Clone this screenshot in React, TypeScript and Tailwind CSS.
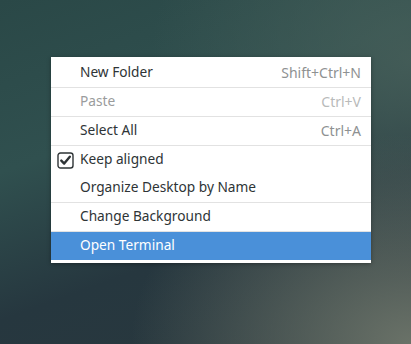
import React from 'react';

type Item = {
  label: string;
  shortcut?: string;
  disabled?: boolean;
  checked?: boolean;
  active?: boolean;
  sepAfter?: boolean;
};

const items: Item[] = [
  { label: 'New Folder', shortcut: 'Shift+Ctrl+N', sepAfter: true },
  { label: 'Paste', shortcut: 'Ctrl+V', disabled: true, sepAfter: true },
  { label: 'Select All', shortcut: 'Ctrl+A', sepAfter: true },
  { label: 'Keep aligned', checked: true },
  { label: 'Organize Desktop by Name', sepAfter: true },
  { label: 'Change Background', sepAfter: true },
  { label: 'Open Terminal', active: true },
];

function CheckBox() {
  return (
    <svg width="17" height="17" viewBox="0 0 17 17" className="absolute left-[6px] top-[6px]">
      <rect x="1" y="1" width="15" height="15" rx="2.5" fill="white" stroke="#2e3436" strokeWidth="1.4" />
      <path d="M4.3 8.6 L7.2 11.6 L12.8 4.8" fill="none" stroke="#2e3436" strokeWidth="2.4" strokeLinecap="round" strokeLinejoin="round" />
    </svg>
  );
}

export default function App() {
  return (
    <div
      className="relative w-[411px] h-[344px] overflow-hidden"
      style={{
        background:
          'radial-gradient(ellipse 280px 210px at 411px 344px, #6a7268 0%, rgba(98,106,98,0) 100%), radial-gradient(ellipse 260px 220px at 411px 60px, rgba(72,96,90,0.8) 0%, rgba(72,96,90,0) 100%), linear-gradient(160deg, #2a4847 0%, #30504f 35%, #26373f 65%, #2a393e 100%)',
        fontFamily: '"Noto Sans", "Open Sans", sans-serif',
      }}
    >
      {/* context menu */}
      <div className="absolute left-[51px] top-[57px] w-[320px] bg-white pt-[2px] pb-[3px] shadow-[0_1px_4px_rgba(0,0,0,0.35)]">
        {items.map((it) => (
          <React.Fragment key={it.label}>
            <div
              className={
                'relative flex h-[28px] items-center pb-[1px] pl-[29px] pr-[10px] text-[13.7px] ' +
                (it.active
                  ? 'bg-[#4a90d9] text-white'
                  : it.disabled
                  ? 'text-[#9a9c9c]'
                  : 'text-[#2e3436]')
              }
            >
              {it.checked && <CheckBox />}
              <span className="flex-1 whitespace-nowrap">{it.label}</span>
              {it.shortcut && (
                <span className={'text-[14px] ' + (it.disabled ? 'text-[#b8baba]' : 'text-[#8e9192]')}>{it.shortcut}</span>
              )}
            </div>
            {it.sepAfter && <div className="h-px bg-[#e2e2e2]" />}
          </React.Fragment>
        ))}
      </div>
    </div>
  );
}
